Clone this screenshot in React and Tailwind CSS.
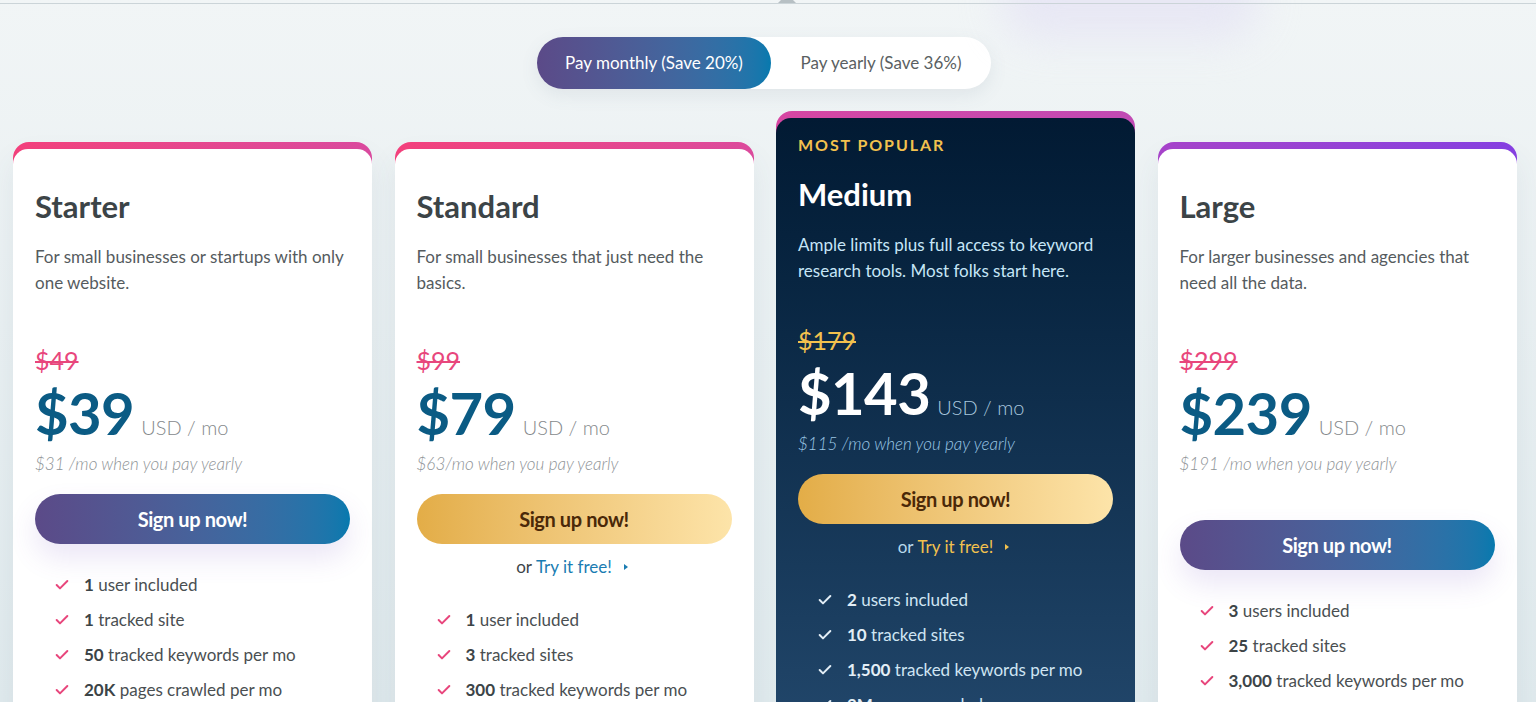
import { Check } from 'lucide-react';

const plans = [
  {
    name: 'Starter',
    desc: 'For small businesses or startups with only one website.',
    old: '$49',
    price: '$39',
    yearly: '$31 /mo when you pay yearly',
    band: 'from-[#f5407c] to-[#dc4a9f]',
    button: 'blue',
    features: [
      ['1', 'user included'],
      ['1', 'tracked site'],
      ['50', 'tracked keywords per mo'],
      ['20K', 'pages crawled per mo'],
      ['Basic', 'keyword research'],
    ],
  },
  {
    name: 'Standard',
    desc: 'For small businesses that just need the basics.',
    old: '$99',
    price: '$79',
    yearly: '$63/mo when you pay yearly',
    band: 'from-[#f5407c] to-[#de4a9d]',
    button: 'gold',
    tryFree: true,
    features: [
      ['1', 'user included'],
      ['3', 'tracked sites'],
      ['300', 'tracked keywords per mo'],
      ['100K', 'pages crawled per mo'],
    ],
  },
  {
    name: 'Medium',
    popular: true,
    desc: 'Ample limits plus full access to keyword research tools. Most folks start here.',
    old: '$179',
    price: '$143',
    yearly: '$115 /mo when you pay yearly',
    band: 'from-[#d746a2] to-[#c04ab4]',
    button: 'gold',
    tryFree: true,
    features: [
      ['2', 'users included'],
      ['10', 'tracked sites'],
      ['1,500', 'tracked keywords per mo'],
      ['2M', 'pages crawled per mo'],
    ],
  },
  {
    name: 'Large',
    desc: 'For larger businesses and agencies that need all the data.',
    old: '$299',
    price: '$239',
    yearly: '$191 /mo when you pay yearly',
    band: 'from-[#a843cb] to-[#873fe2]',
    button: 'blue',
    extraGap: true,
    features: [
      ['3', 'users included'],
      ['25', 'tracked sites'],
      ['3,000', 'tracked keywords per mo'],
      ['4M', 'pages crawled per mo'],
    ],
  },
];

function PlanCard({ plan }) {
  const dark = plan.popular;
  return (
    <div
      className={`w-[359px] shrink-0 rounded-t-[16px] bg-linear-to-r ${plan.band} pt-[8px] ${
        dark ? 'mt-[74px]' : 'mt-[105px]'
      }`}
    >
      <div
        className={`-mt-[1px] rounded-t-[15px] px-[22px] pb-10 ${
          dark
            ? 'bg-linear-to-b from-[#021a33] to-[#2a5279] h-[760px] pt-[17px]'
            : 'bg-white h-[760px] pt-[37px] shadow-[0_10px_30px_rgba(60,90,110,0.08)]'
        }`}
      >
        {dark && (
          <div className="text-[16px] leading-[20px] font-bold tracking-[0.12em] text-[#f2c14e]">
            MOST POPULAR
          </div>
        )}
        <h3
          className={`text-[31px] leading-[40px] font-bold ${
            dark ? 'mt-[19px] text-white' : 'text-[#3c4447]'
          }`}
        >
          {plan.name}
        </h3>
        <p
          className={`mt-[18px] text-[17px] leading-[26px] ${
            dark ? 'text-[#c6e6f7]' : 'text-[#555b5e]'
          }`}
        >
          {plan.desc}
        </p>
        <div
          className={`text-[25px] leading-[30px] line-through decoration-[1.5px] ${
            dark ? 'mt-[41px] text-[#f2c14e]' : 'mt-[49px] text-[#e8467c]'
          }`}
        >
          {plan.old}
        </div>
        <div className="mt-[4px] flex items-baseline gap-[7px]">
          <span
            className={`text-[58px] leading-[68px] font-bold tracking-[-0.01em] ${
              dark ? 'text-white' : 'text-[#0b5b84]'
            }`}
          >
            {plan.price}
          </span>
          <span
            className={`text-[20px] font-light ${dark ? 'text-[#a9c8de]' : 'text-[#85898c]'}`}
          >
            USD / mo
          </span>
        </div>
        <div
          className={`mt-[6px] text-[17px] leading-[22px] italic font-light ${
            dark ? 'text-[#9cc8e6]' : 'text-[#8e9396]'
          }`}
        >
          {plan.yearly}
        </div>
        <button
          className={`block w-full h-[50px] rounded-full text-[20px] font-bold tracking-[-0.02em] ${
            plan.extraGap ? 'mt-[45px]' : 'mt-[19px]'
          } ${
            plan.button === 'blue'
              ? 'bg-linear-to-r from-[#5b4a88] to-[#0679ae] text-white shadow-[0_14px_28px_rgba(110,80,190,0.14)]'
              : 'bg-linear-to-r from-[#e3ad47] to-[#fde4a9] text-[#4a2808]'
          }`}
        >
          Sign up now!
        </button>
        {plan.tryFree && (
          <div
            className={`mt-[11px] flex items-center justify-center gap-[4px] text-[17px] leading-[24px] ${
              dark ? 'text-[#b7d8ec]' : 'text-[#3c4447]'
            }`}
          >
            <span>or</span>
            <span className={dark ? 'text-[#f2c14e]' : 'text-[#1a7cb2]'}>Try it free!</span>
            <svg width="12" height="12" viewBox="0 0 12 12" className="ml-[4px]">
              <path d="M4 3 L8 6 L4 9 Z" fill={dark ? '#f2c14e' : '#1a7cb2'} />
            </svg>
          </div>
        )}
        <ul
          className={`pl-[19px] flex flex-col gap-[11px] ${
            plan.tryFree ? 'mt-[29px]' : 'mt-[29px]'
          }`}
        >
          {plan.features.map(([num, text]) => (
            <li
              key={text}
              className={`flex items-center gap-[14px] text-[17px] leading-[24px] ${
                dark ? 'text-[#cfe5f3]' : 'text-[#4a4f52]'
              }`}
            >
              <Check
                size={16}
                strokeWidth={3}
                className={dark ? 'text-[#e3eef6]' : 'text-[#e8467c]'}
              />
              <span>
                <span className={`font-bold ${dark ? 'text-[#e3eef6]' : 'text-[#3c4447]'}`}>{num}</span>{' '}
                {text}
              </span>
            </li>
          ))}
        </ul>
      </div>
    </div>
  );
}

export default function App() {
  return (
    <div
      className="relative h-[702px] overflow-hidden bg-linear-to-b from-[#f1f5f6] to-[#e0eaed]"
      style={{ fontFamily: 'Lato, "Open Sans", sans-serif' }}
    >
      {/* faint glow near the top */}
      <div className="pointer-events-none absolute left-[1000px] top-[-40px] h-[80px] w-[260px] rounded-full bg-[#e4e2f4] blur-[20px] opacity-70" />

      {/* top rule with little pointer */}
      <div className="relative h-[4px] border-b border-[#cbd4d8]">
        <div className="absolute left-[778px] top-[-6px] h-0 w-0 border-x-[9px] border-b-[9px] border-x-transparent border-b-[#b7c0c4]" />
      </div>

      {/* billing toggle */}
      <div className="mt-[33px] flex justify-center">
        <div className="ml-[-8px] flex h-[52px] w-[454px] items-center rounded-full bg-white shadow-[0_6px_18px_rgba(90,110,130,0.10)]">
          <div className="flex h-full w-[234px] items-center justify-center rounded-full bg-linear-to-r from-[#5b4a88] to-[#0679ae] text-[17px] text-white">
            Pay monthly (Save 20%)
          </div>
          <div className="flex h-full flex-1 items-center justify-center text-[17px] text-[#5a5f62]">
            Pay yearly (Save 36%)
          </div>
        </div>
      </div>

      {/* plans */}
      <div className="flex items-start gap-[22.5px] pl-[13px] -mt-[52px]">
        {plans.map(plan => (
          <PlanCard key={plan.name} plan={plan} />
        ))}
      </div>
    </div>
  );
}
